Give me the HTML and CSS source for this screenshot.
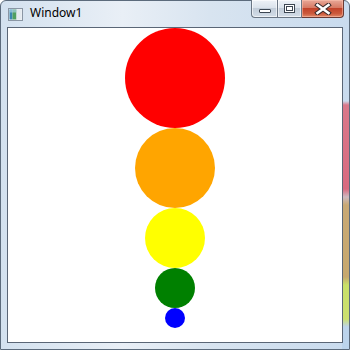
FILE: index.html
```html
<!DOCTYPE html>
<html>
<head>
<meta charset="utf-8">
<link rel="stylesheet" href="styles.css">
</head>
<body>
<div class="window">
  <div class="titlebar">
    <svg class="appicon" width="15" height="13" viewBox="0 0 15 13">
      <rect x="0.5" y="0.5" width="14" height="12" fill="#eef2f6" stroke="#8a96a4"/>
      <rect x="1.5" y="1.5" width="3" height="10" fill="#3a86b0"/>
      <rect x="4.5" y="1.5" width="4" height="10" fill="#4fa060"/>
      <rect x="8.5" y="1.5" width="5" height="10" fill="#e4eaf0"/>
      <rect x="1.5" y="1.5" width="7" height="3" fill="#a8d0e4" opacity="0.7"/>
    </svg>
    <span class="title">Window1</span>
    <div class="buttons">
      <div class="btn min"><span class="minglyph"></span></div>
      <div class="btn max"><span class="maxglyph"></span></div>
      <div class="btn close">
        <svg width="18" height="12" viewBox="0 0 18 12">
          <path d="M3.5 2 L14.5 10 M14.5 2 L3.5 10" stroke="#3a2a2a" stroke-width="4.6" stroke-linecap="square"/>
          <path d="M3.5 2 L14.5 10 M14.5 2 L3.5 10" stroke="#ffffff" stroke-width="2.6" stroke-linecap="square"/>
        </svg>
      </div>
    </div>
  </div>
  <div class="client">
    <div class="stack">
      <div class="circle c1"></div>
      <div class="circle c2"></div>
      <div class="circle c3"></div>
      <div class="circle c4"></div>
      <div class="circle c5"></div>
    </div>
  </div>
</div>
</body>
</html>
```

FILE: styles.css
```css
html, body {
  margin: 0;
  padding: 0;
  background: #ffffff;
}

.window {
  width: 350px;
  height: 350px;
  box-sizing: border-box;
  border: 1px solid #5c6b7c;
  border-radius: 6px 6px 0 0;
  display: flex;
  flex-direction: column;
  background:
    linear-gradient(to bottom,
      rgba(255,255,255,0) 0px, rgba(255,255,255,0) 100px,
      #d9788a 104px, #d86a80 188px, #cdb9c0 196px,
      #c8a874 204px, #c6a86e 276px, #c8e068 284px,
      #cce070 318px, #bcd4ec 326px, #bcd4ec 350px) right top / 7px 100% no-repeat,
    linear-gradient(to right, #d3e1ef 0%, #e9eff6 35%, #d8e4f0 60%, #c9dbee 100%);
}

.titlebar {
  height: 26px;
  display: flex;
  align-items: flex-start;
  flex-shrink: 0;
}

.appicon {
  margin-left: 7px;
  margin-top: 7px;
  flex-shrink: 0;
}

.title {
  font-family: "Noto Sans", "Open Sans", sans-serif;
  font-size: 12px;
  color: #000000;
  margin-left: 7px;
  margin-top: 4px;
  line-height: 16px;
}

.buttons {
  margin-left: auto;
  margin-right: 5px;
  margin-top: -1px;
  display: flex;
  height: 18px;
}

.btn {
  height: 18px;
  box-sizing: border-box;
  border: 1px solid #6a7684;
  border-top: none;
  display: flex;
  align-items: center;
  justify-content: center;
  background: linear-gradient(to bottom, #eef2f7 0%, #dbe3ec 45%, #c2cdd9 50%, #d3dde8 100%);
  box-shadow: inset 0 0 0 1px rgba(255,255,255,0.6);
}

.min {
  width: 26px;
  border-radius: 0 0 0 4px;
  border-right: none;
}

.max {
  width: 25px;
}

.close {
  width: 42px;
  border-left: none;
  border-color: #6a3a34;
  border-radius: 0 0 4px 0;
  background: linear-gradient(to bottom, #e8a898 0%, #d77a64 45%, #c2432a 50%, #cc5a3c 80%, #e08a6a 100%);
  box-shadow: inset 0 0 0 1px rgba(255,200,180,0.5);
}

.minglyph {
  display: block;
  width: 12px;
  height: 4px;
  box-sizing: border-box;
  border: 1px solid #3c4652;
  background: #ffffff;
  margin-top: 5px;
  border-radius: 1px;
}

.maxglyph {
  display: block;
  width: 11px;
  height: 9px;
  box-sizing: border-box;
  border: 1px solid #3c4652;
  background: #ffffff;
  box-shadow: inset 0 0 0 1px #ffffff, inset 0 0 0 2px #3c4652;
}

.client {
  flex: 1;
  margin: 0 6px 6px 6px;
  border: 1px solid #5a6676;
  background: #ffffff;
  overflow: hidden;
}

.stack {
  display: flex;
  flex-direction: column;
  align-items: center;
}

.circle {
  border-radius: 50%;
  flex-shrink: 0;
}

.c1 { width: 100px; height: 100px; background: #ff0000; }
.c2 { width: 80px; height: 80px; background: #ffa500; }
.c3 { width: 60px; height: 60px; background: #ffff00; }
.c4 { width: 40px; height: 40px; background: #008000; }
.c5 { width: 20px; height: 20px; background: #0000ff; }
```
